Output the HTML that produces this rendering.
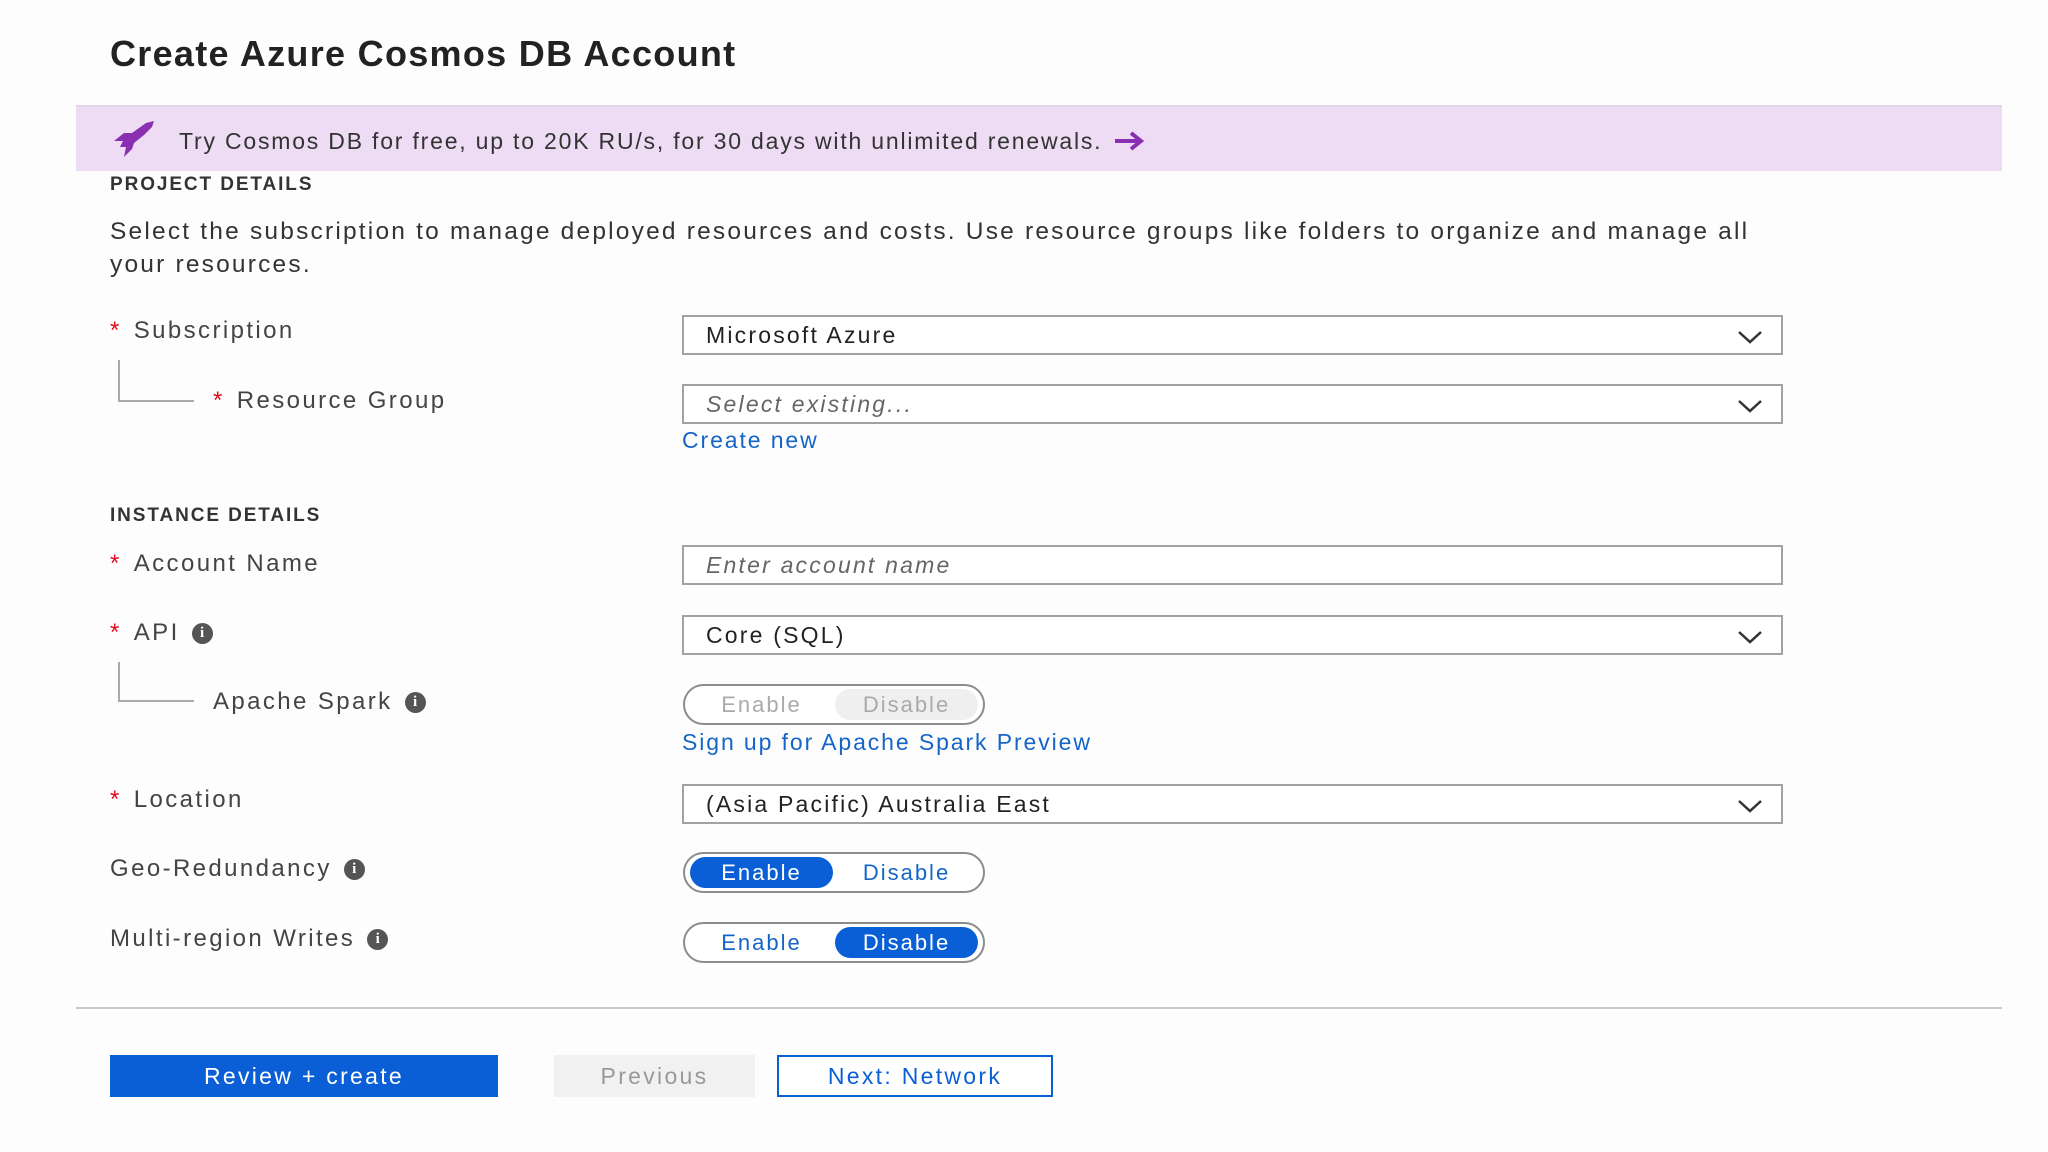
<!DOCTYPE html>
<html><head><meta charset="utf-8"><style>
*{margin:0;padding:0;box-sizing:border-box}
body{width:2048px;height:1152px;background:#fdfdfd;position:relative;overflow:hidden;font-family:"Liberation Sans",sans-serif;color:#3a3a3a;letter-spacing:2px}
.a{position:absolute;white-space:nowrap}
.lbl{font-size:24px;color:#444;line-height:30px;letter-spacing:2.4px}
.req{color:#e00b1c;margin-right:12px}
.sel{position:absolute;left:682px;width:1101px;height:40px;border:2px solid #a2a2a2;background:#fff;font-size:23px;line-height:36px;padding-left:22px;color:#222;letter-spacing:2.2px}
.sel svg{position:absolute;right:18px;top:13px}
.ph{font-style:italic;color:#666}
.info{display:inline-block;width:21px;height:21px;border-radius:50%;background:#555;color:#fff;font-size:15px;font-weight:bold;line-height:21px;text-align:center;vertical-align:middle;margin-left:12px;font-family:"Liberation Serif",serif;letter-spacing:0}
.link{color:#1565c8;font-size:23px;line-height:30px;letter-spacing:1.9px}
.tg{position:absolute;left:683px;width:302px;height:41px;border:2px solid #8c8c8c;border-radius:21px;background:#fff}
.tg span{position:absolute;top:3px;height:31px;width:143px;border-radius:16px;text-align:center;font-size:22px;line-height:31px;color:#1565c8;letter-spacing:2px}
.tg .e{left:5px}.tg .d{left:150px}
.tg .on{background:#0a5fd6;color:#fff}
.tree{position:absolute;border-left:2px solid #aaa;border-bottom:2px solid #aaa;width:76px}
.sec{font-size:19px;font-weight:bold;color:#333;line-height:24px;letter-spacing:1.9px}
.btn{font-size:23px;line-height:42px;text-align:center;letter-spacing:2.3px}
</style></head><body>
<div class="a" style="left:110px;top:32px;font-size:36px;font-weight:bold;color:#222;line-height:44px;letter-spacing:1.3px">Create Azure Cosmos DB Account</div>
<div class="a" style="left:76px;top:105px;width:1926px;height:66px;background:#eddcf3;border-top:2px solid #e0d6e4"></div>
<svg class="a" style="left:108px;top:119px" width="50" height="42" viewBox="0 0 50 42"><path d="M46 2 L38 4 L24 14 L16 14 L6 22 L15 22 L12 28 L18 28 L16 38 L24 30 L26 24 L36 16 L44 8 Z" fill="#8b2fb2"/></svg>
<div class="a" style="left:179px;top:126px;font-size:23px;line-height:30px;color:#333;letter-spacing:1.8px">Try Cosmos DB for free, up to 20K RU/s, for 30 days with unlimited renewals.</div>
<svg class="a" style="left:1113px;top:130px" width="32" height="22" viewBox="0 0 32 22"><path d="M2 11 H28 M18 3 L28 11 L18 19" stroke="#8b2fb2" stroke-width="4" fill="none"/></svg>
<div class="a sec" style="left:110px;top:173px">PROJECT DETAILS</div>
<div class="a" style="left:110px;top:215px;font-size:24.5px;line-height:33px;color:#333;letter-spacing:2.2px">Select the subscription to manage deployed resources and costs. Use resource groups like folders to organize and manage all<br>your resources.</div>

<div class="a lbl" style="left:110px;top:316px"><span class="req">*</span>Subscription</div>
<div class="sel" style="top:315px">Microsoft Azure<svg width="26" height="14" viewBox="0 0 26 14"><path d="M2 2 L13 12 L24 2" stroke="#333" stroke-width="2.5" fill="none"/></svg></div>
<div class="tree" style="left:118px;top:360px;height:42px"></div>
<div class="a lbl" style="left:213px;top:386px"><span class="req">*</span>Resource Group</div>
<div class="sel" style="top:384px"><span class="ph">Select existing...</span><svg width="26" height="14" viewBox="0 0 26 14"><path d="M2 2 L13 12 L24 2" stroke="#333" stroke-width="2.5" fill="none"/></svg></div>
<div class="a link" style="left:682px;top:425px">Create new</div>

<div class="a sec" style="left:110px;top:504px">INSTANCE DETAILS</div>
<div class="a lbl" style="left:110px;top:549px"><span class="req">*</span>Account Name</div>
<div class="sel" style="top:545px"><span class="ph">Enter account name</span></div>
<div class="a lbl" style="left:110px;top:618px"><span class="req">*</span>API<span class="info">i</span></div>
<div class="sel" style="top:615px">Core (SQL)<svg width="26" height="14" viewBox="0 0 26 14"><path d="M2 2 L13 12 L24 2" stroke="#333" stroke-width="2.5" fill="none"/></svg></div>
<div class="tree" style="left:118px;top:662px;height:40px"></div>
<div class="a lbl" style="left:213px;top:687px">Apache Spark<span class="info">i</span></div>
<div class="tg" style="top:684px"><span class="e" style="color:#aaa">Enable</span><span class="d" style="color:#aaa;background:#efefef">Disable</span></div>
<div class="a link" style="left:682px;top:727px">Sign up for Apache Spark Preview</div>
<div class="a lbl" style="left:110px;top:785px"><span class="req">*</span>Location</div>
<div class="sel" style="top:784px">(Asia Pacific) Australia East<svg width="26" height="14" viewBox="0 0 26 14"><path d="M2 2 L13 12 L24 2" stroke="#333" stroke-width="2.5" fill="none"/></svg></div>
<div class="a lbl" style="left:110px;top:854px">Geo-Redundancy<span class="info">i</span></div>
<div class="tg" style="top:852px"><span class="e on">Enable</span><span class="d">Disable</span></div>
<div class="a lbl" style="left:110px;top:924px">Multi-region Writes<span class="info">i</span></div>
<div class="tg" style="top:922px"><span class="e">Enable</span><span class="d on">Disable</span></div>

<div class="a" style="left:76px;top:1007px;width:1926px;height:2px;background:#c8c8c8"></div>
<div class="a btn" style="left:110px;top:1055px;width:388px;height:42px;background:#0a5fd6;color:#fff">Review + create</div>
<div class="a btn" style="left:554px;top:1055px;width:201px;height:42px;background:#f1f1f1;color:#999">Previous</div>
<div class="a btn" style="left:777px;top:1055px;width:276px;height:42px;border:2px solid #0a5fd6;color:#0a5fd6;line-height:38px;background:#fff">Next: Network</div>
</body></html>
